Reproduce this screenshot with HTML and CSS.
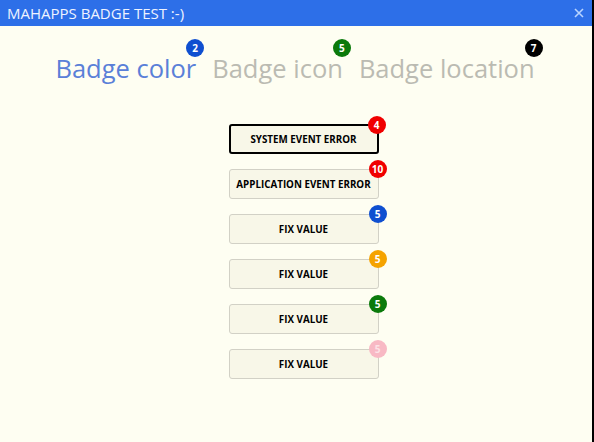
FILE: index.html
```html
<!DOCTYPE html>
<html>
<head>
<meta charset="utf-8">
<link rel="stylesheet" href="styles.css">
</head>
<body>
<div class="window">
  <div class="titlebar">
    <span class="title">MAHAPPS BADGE TEST :-)</span>
    <span class="close">
      <svg width="10" height="10" viewBox="0 0 10 10"><path d="M1 1L9 9M9 1L1 9" stroke="#b8d4ff" stroke-width="1.6"/></svg>
    </span>
  </div>
  <div class="content">
    <div class="tabs">
      <div class="tab selected">Badge color<span class="badge b-blue tbadge">2</span></div>
      <div class="tab">Badge icon<span class="badge b-green tbadge">5</span></div>
      <div class="tab">Badge location<span class="badge b-black tbadge">7</span></div>
    </div>
    <div class="buttons">
      <div class="btn focused">SYSTEM EVENT ERROR<span class="badge b-red bbadge">4</span></div>
      <div class="btn">APPLICATION EVENT ERROR<span class="badge b-red bbadge">10</span></div>
      <div class="btn">FIX VALUE<span class="badge b-blue bbadge">5</span></div>
      <div class="btn">FIX VALUE<span class="badge b-orange bbadge">5</span></div>
      <div class="btn">FIX VALUE<span class="badge b-green bbadge">5</span></div>
      <div class="btn">FIX VALUE<span class="badge b-pink bbadge">5</span></div>
    </div>
  </div>
</div>
</body>
</html>
```
FILE: styles.css
```css
html, body {
  margin: 0;
  padding: 0;
  background: #fefef2;
}
.window {
  width: 592px;
  height: 442px;
  border-right: 2px solid #000;
  background: #fefef2;
  font-family: "Open Sans", "Noto Sans", sans-serif;
  display: flex;
  flex-direction: column;
}
.titlebar {
  height: 26px;
  background: #2d6fe8;
  display: flex;
  align-items: center;
  justify-content: space-between;
  padding: 0 8px 0 7px;
}
.title {
  color: #eef3ff;
  font-size: 15px;
  margin-top: -1px;
}
.close {
  display: flex;
  align-items: center;
}
.content {
  flex: 1;
  display: flex;
  flex-direction: column;
  align-items: center;
}
.tabs {
  display: flex;
  gap: 16px;
  margin-top: 31px;
  margin-left: -2px;
}
.tab {
  position: relative;
  font-size: 25.5px;
  color: #bbbbb2;
  line-height: 22px;
}
.tab.selected {
  color: #5a80d8;
}
.badge {
  position: absolute;
  width: 18px;
  height: 18px;
  border-radius: 50%;
  color: #fff;
  font-size: 10px;
  font-weight: 700;
  display: flex;
  align-items: center;
  justify-content: center;
  line-height: 1;
}
.tbadge {
  right: -8px;
  top: -18px;
}
.b-blue { background: #0f4fd0; }
.b-green { background: #0b7a0b; }
.b-black { background: #000; }
.b-red { background: #f00000; }
.b-orange { background: #f5a300; }
.b-pink { background: #f8b9c4; color: #fde2e6; }
.buttons {
  display: flex;
  flex-direction: column;
  gap: 15px;
  margin-top: 45px;
  width: 150px;
  margin-left: 15px;
}
.btn {
  position: relative;
  box-sizing: border-box;
  height: 30px;
  border: 1px solid #d2d1c6;
  border-radius: 3px;
  background: #f8f7e8;
  font-size: 9.8px;
  font-weight: 700;
  color: #000;
  display: flex;
  align-items: center;
  justify-content: center;
  white-space: nowrap;
}
.btn.focused {
  border: 2px solid #000;
}
.bbadge {
  right: -9px;
  top: -10px;
}
```
